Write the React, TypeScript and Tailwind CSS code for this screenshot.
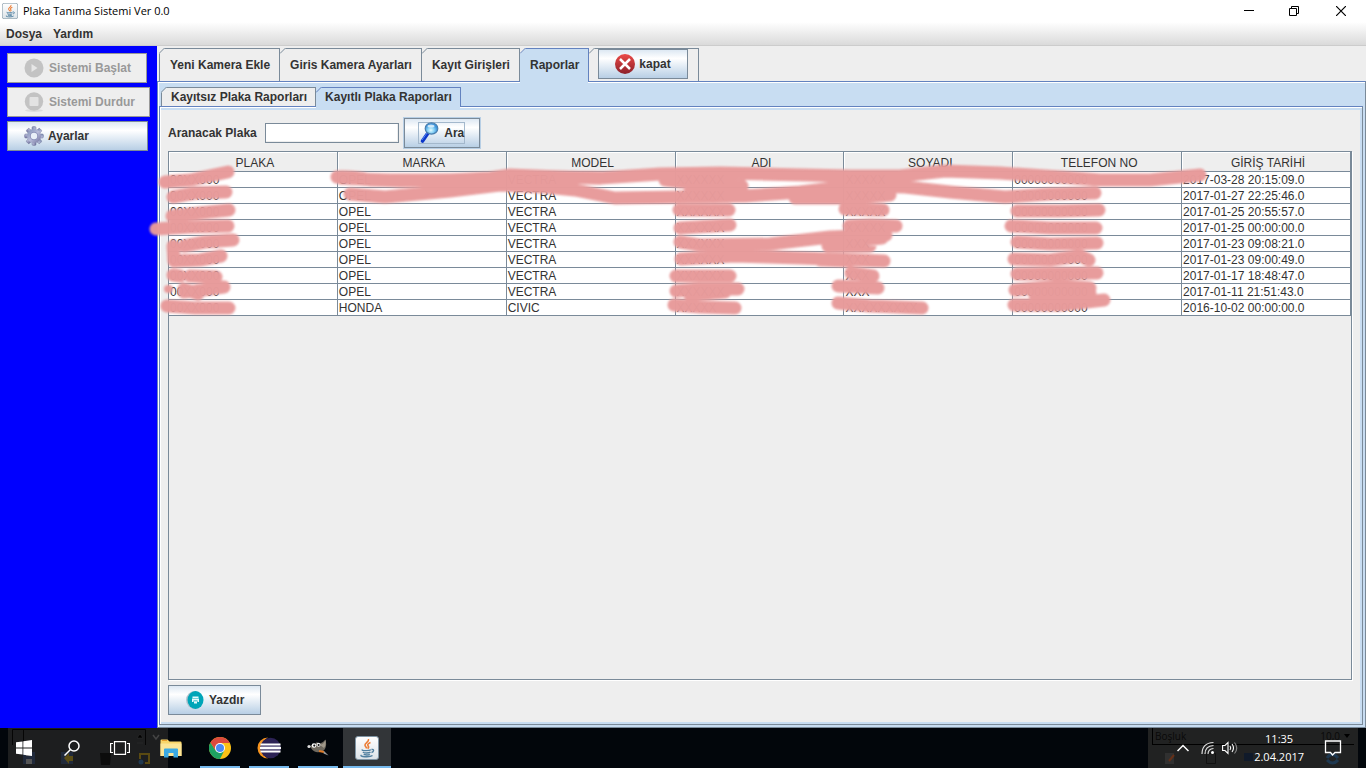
import type { ReactNode } from 'react'

const columns = ['PLAKA', 'MARKA', 'MODEL', 'ADI', 'SOYADI', 'TELEFON NO', 'GİRİŞ TARİHİ']

// personal columns only hold filler, they are scribbled over below
const rows = [
  ['00XX000', 'OPEL', 'VECTRA', 'XXXXXX', 'XXXXX', '00000000000', '2017-03-28 20:15:09.0'],
  ['00XX000', 'OPEL', 'VECTRA', 'XXXXXX', 'XXXXX', '00000000000', '2017-01-27 22:25:46.0'],
  ['00XX000', 'OPEL', 'VECTRA', 'XXXXXX', 'XXXXX', '00000000000', '2017-01-25 20:55:57.0'],
  ['00XX000', 'OPEL', 'VECTRA', 'XXXXXX', 'XXXXX', '00000000000', '2017-01-25 00:00:00.0'],
  ['00XX000', 'OPEL', 'VECTRA', 'XXXXXX', 'XXX', '00000000000', '2017-01-23 09:08:21.0'],
  ['00XX000', 'OPEL', 'VECTRA', 'XXXXXX', 'XXX', '00000000000', '2017-01-23 09:00:49.0'],
  ['00XX000', 'OPEL', 'VECTRA', 'XXXXXX', 'XXX', '00000000000', '2017-01-17 18:48:47.0'],
  ['00XX000', 'OPEL', 'VECTRA', 'XXXXXX', 'XXX', '00000000000', '2017-01-11 21:51:43.0'],
  ['00XX000', 'HONDA', 'CIVIC', 'XXXXX', 'XXXXXXXXX', '00000000000', '2016-10-02 00:00:00.0'],
]

const scribbles = [
  'M165 182L190 180L228 172',
  'M173 197L195 193L226 192',
  'M172 216L200 213L229 210',
  'M156 229L190 227L228 226',
  'M184 246L205 242L233 240',
  'M173 246L174 261L200 260L221 256',
  'M173 275L180 276',
  'M190 276L216 277',
  'M184 292L195 291L224 287M184 289L198 294',
  'M167 306L195 308L229 308',
  'M337 177Q350 176 370 180L450 180L490 178L510 175L560 177L600 178L660 174L720 173L850 176L900 176L945 171L1000 173L1060 177L1100 180L1150 180L1200 175',
  'M340 178L400 181L460 180M500 178L540 177L600 178M665 180L700 184L742 186M680 177L730 180',
  'M350 194L385 197L450 191L500 185L545 187L575 190L615 198L680 197L745 196L800 192L850 186L905 187L950 192L1005 197L1050 194L1095 193',
  'M795 198L850 198L890 195M690 192L745 195M830 192L880 190',
  'M679 210L729 210',
  'M680 228L730 225',
  'M680 242L700 245L770 244L830 237L886 235M828 246L870 246M850 241L882 238',
  'M681 259L735 256L800 258L884 261M820 260L850 261',
  'M676 276L730 276',
  'M676 291L700 289L738 289M690 295L725 292',
  'M674 305L700 307L735 308',
  'M845 209L883 210',
  'M849 226L870 225L896 226',
  'M851 273L873 276',
  'M838 286L878 288',
  'M838 303L870 306L922 308',
  'M1017 211L1060 211L1099 210',
  'M1011 226L1050 228L1096 228',
  'M1017 242L1050 244L1097 243',
  'M1014 259L1050 260L1080 256L1089 260',
  'M1017 274L1097 273',
  'M1015 290L1060 286L1090 288M1035 295L1090 293',
  'M1014 305L1060 305L1104 300M1050 300L1090 298',
]

function Scribbles() {
  return (
    <svg className="absolute -left-px -top-px overflow-visible pointer-events-none" width="1" height="1" aria-hidden="true">
      <defs>
        <filter id="brush" filterUnits="userSpaceOnUse" x="140" y="150" width="1100" height="180">
          <feGaussianBlur stdDeviation="0.9" />
        </filter>
      </defs>
      <g transform="translate(-168 -151)">
        <g filter="url(#brush)" opacity="0.98" fill="none" stroke="#e89b9b" strokeWidth="13" strokeLinecap="round" strokeLinejoin="round">
          {scribbles.map((d) => <path key={d} d={d} />)}
          <path d="M168 289h1" strokeWidth="8" />
        </g>
      </g>
    </svg>
  )
}

function MetalButton({ className = '', disabled, children }: { className?: string; disabled?: boolean; children: ReactNode }) {
  return (
    <button
      type="button"
      disabled={disabled}
      className={`flex h-[30px] items-center border font-bold ${disabled ? 'border-[#999] bg-[#eee] text-[#999]' : 'border-[#7a8a99] bg-linear-to-b from-[#dde8f3] via-white via-30% to-[#b8cfe5] text-[#333]'} ${className}`}
    >
      {children}
    </button>
  )
}

function Tab({ label, selected, first, small, children }: { label?: string; selected?: boolean; first?: boolean; small?: boolean; children?: ReactNode }) {
  const line = selected ? '#6382bf' : '#7a8a99'
  return (
    <div
      className={`relative flex border-t border-r ${first ? 'border-l' : ''} ${small ? 'h-[19px]' : 'h-[33px]'} ${selected ? 'border-[#6382bf] bg-[#c8ddf2]' : 'border-[#7a8a99] bg-[#eee]'}`}
    >
      {label ? (
        <button type="button" role="tab" aria-selected={!!selected} className={`font-bold ${small ? 'pl-[9px] pr-2' : 'pl-2.5 pr-[9px]'}`}>{label}</button>
      ) : children}
      <svg className={`absolute -top-px ${first ? '-left-px' : 'left-0'}`} width="6" height="6" aria-hidden="true">
        <path d="M0 0H6L0 6Z" fill={small ? '#c8ddf2' : '#eee'} />
        <path d="M0 5.5L5.5 0" stroke={line} />
      </svg>
      {/* hides the panel's top line under the active tab */}
      {selected && <span className={`absolute left-0 right-0 top-full bg-[#c8ddf2] ${small ? 'h-[3px]' : 'h-0.5'}`} />}
    </div>
  )
}

function JavaCup({ size }: { size: number }) {
  return (
    <svg width={size} height={size} viewBox="0 0 24 24" fill="none" aria-hidden="true">
      <defs>
        <linearGradient id="cup" x1="0" y1="0" x2="0" y2="1">
          <stop stopColor="#fff" />
          <stop offset="1" stopColor="#dce3e8" />
        </linearGradient>
      </defs>
      <rect x="0.5" y="0.5" width="23" height="23" rx="2.5" fill="url(#cup)" stroke="#7f95a5" />
      <path d="M13.5 3C14.5 6 9 7 10 9.500C10.300 10.400 11.500 11 11.500 12.500M15.500 6.500C12 8 12.500 9 13.300 10.200C13.800 11 13.400 12 12.600 12.500" stroke="#ec7d35" strokeWidth="1.600" />
      <path d="M7.500 13.500C5.500 14.800 14 15.200 16 13.700M8 16C8.500 17.400 14 17.200 15.500 16.200M8.800 18.200C9.500 19.300 13.500 19.200 14.800 18.300M16.500 13.500C19.500 12.800 19 16 16.500 16.500M6.500 19C3.500 20.600 14.500 21.800 17.500 19.500" stroke="#4f7f9f" strokeWidth="1.400" />
    </svg>
  )
}

function Gear() {
  return (
    <svg width="20" height="20" viewBox="0 0 20 20" aria-hidden="true">
      <defs>
        <linearGradient id="gear" x1="0" y1="0" x2="1" y2="1">
          <stop stopColor="#7c8eb2" />
          <stop offset=".5" stopColor="#b9bcda" />
          <stop offset="1" stopColor="#6f719d" />
        </linearGradient>
      </defs>
      <g fill="url(#gear)" stroke="#6b7196" strokeWidth=".5">
        {[0, 45, 90, 135].map((a) => <rect key={a} x="8" y="0.6" width="4" height="18.800" rx="1.200" transform={`rotate(${a} 10 10)`} />)}
      </g>
      <circle cx="10" cy="10" r="7" fill="url(#gear)" />
      <circle cx="10" cy="10" r="4.200" fill="#8d93ba" />
      <circle cx="10" cy="10" r="3.200" fill="#e9f0f8" />
    </svg>
  )
}

function Magnifier() {
  return (
    <svg width="20" height="22" viewBox="0 0 20 22" aria-hidden="true">
      <defs>
        <radialGradient id="lens" cx=".45" cy=".65">
          <stop stopColor="#e4fbff" />
          <stop offset=".5" stopColor="#8bd3f5" />
          <stop offset="1" stopColor="#3c94dc" />
        </radialGradient>
      </defs>
      <path d="M9 11L3.500 19" stroke="#0b36c9" strokeWidth="3.600" strokeLinecap="round" />
      <path d="M8 11L3 18" stroke="#4f83f2" strokeWidth="1" />
      <ellipse cx="12.500" cy="6.500" rx="6.300" ry="5.600" fill="url(#lens)" stroke="#4a7fae" strokeWidth="1.200" />
      <ellipse cx="12" cy="4" rx="3.500" ry="1.600" fill="#fff" opacity=".7" />
    </svg>
  )
}

function Chrome() {
  return (
    <svg width="22" height="22" viewBox="0 0 22 22" aria-hidden="true">
      <circle cx="11" cy="11" r="11" fill="#fbc116" />
      <path d="M1.470 5.500A11 11 0 0 0 11 22L15.300 13.500L11 11L6.700 13.500Z" fill="#1ea362" />
      <path d="M1.470 5.500A11 11 0 0 1 20.530 5.500L20.800 6H11L6.700 13.500Z" fill="#dc4a3d" />
      <circle cx="11" cy="11" r="5" fill="#fff" />
      <circle cx="11" cy="11" r="4" fill="#4a8af4" />
    </svg>
  )
}

function Eclipse() {
  return (
    <svg width="24" height="22" viewBox="0 0 24 22" aria-hidden="true">
      <path d="M11 0.500A10.500 10.500 0 0 0 11 21.500A12 12 0 0 1 11 0.500Z" fill="#f7941e" />
      <circle cx="13.500" cy="11" r="10.300" fill="#2c2255" />
      <path d="M3.500 7.500H23.500M3 11H24M3.500 14.500H23.500" stroke="#fff" strokeWidth="1.800" />
      <path d="M3.500 9.300H23.500M3.500 12.800H23.500" stroke="#8d88a8" strokeWidth="1" />
    </svg>
  )
}

function Gimp() {
  return (
    <svg width="22" height="18" viewBox="0 0 22 18" aria-hidden="true">
      <path d="M3 7L8 5L10 3L12 5Q16 4 18.500 0.500Q20 6 18 10Q15 14 9 13Q5 12 3 7Z" fill="#6f695f" />
      <path d="M13 6Q17 5 18.500 1Q19 7 17 9Z" fill="#a0988a" />
      <circle cx="2" cy="7.500" r="1.600" fill="#ddd" />
      <circle cx="7" cy="6.500" r="2.300" fill="#fff" />
      <circle cx="11.500" cy="5.800" r="2" fill="#eee" />
      <circle cx="7.300" cy="6.600" r="1.100" fill="#111" />
      <circle cx="11.600" cy="6" r="1" fill="#111" />
      <path d="M12 12L17 13" stroke="#e07b28" strokeWidth="2" />
      <path d="M17 12L21.500 16.500L16.500 14.500Z" fill="#9c9c9c" />
    </svg>
  )
}

function Folder() {
  return (
    <svg width="22" height="19" viewBox="0 0 22 19" aria-hidden="true">
      <path d="M0.500 1.500Q0.500 0.500 1.500 0.500H7.500L9.500 2.500H20.500Q21.500 2.500 21.500 3.500V17H0.500Z" fill="#f9d66b" />
      <path d="M2 1.500H7" stroke="#e79c2a" />
      <path d="M0.500 4.500H21.500V17H0.500Z" fill="#fce597" />
      <path d="M4 10.500Q4 9.500 5 9.500H17Q18 9.500 18 10.500V18.500H13.500V14H8.500V18.500H4Z" fill="#3ba9e4" />
    </svg>
  )
}

function TaskApp({ label, running, active, children }: { label: string; running?: boolean; active?: boolean; children: ReactNode }) {
  return (
    <button type="button" aria-label={label} className={`flex h-full w-12 flex-col items-center ${active ? 'bg-[#323538]' : ''}`}>
      <span className="flex flex-1 items-center pt-0.5">{children}</span>
      <span className={`h-0.5 ${active ? 'w-full' : 'w-10'} ${running || active ? 'bg-[#76b9ed]' : ''}`} />
    </button>
  )
}

function Taskbar() {
  return (
    <footer className="relative flex h-10 items-stretch bg-[#02060b] font-['Open_Sans',sans-serif] text-white">
      {/* docks of the window behind, seen through the bar */}
      <svg className="absolute left-2 top-0" width="160" height="40" aria-hidden="true">
        <rect width="160" height="40" fill="#1d1e1f" />
        <path d="M4.500 17V1.500H137.500V17M15.500 2V15" fill="none" stroke="#050505" />
        <path d="M129 10l3-4l3 4zM129 15h6" fill="#000" stroke="#333" strokeWidth=".5" />
        <path d="M145 7l3 4l3-4" fill="none" stroke="#444" strokeWidth="1.500" />
        <path d="M15 24h12v12H15zM53 24h12v12H53z" fill="#20293a" />
        <path d="M18 24h6v4h-6zM18 31h6v5h-6z" fill="#555" />
        <path d="M56 30l5-5v3h4v5h-4v3z" fill="#5a4c14" />
        <path d="M92 25h11l-1 12h-9z" fill="#0c0c0c" />
        <path d="M132 31v-5h9v9h-4" fill="none" stroke="#5a4a12" strokeWidth="2" />
        <circle cx="133" cy="34" r="2.500" fill="#1f3850" />
      </svg>
      <div className="absolute right-2 top-0 h-10 w-[210px] bg-[#212222] px-1 text-[10px] leading-4 text-[#090909]">
        <div className="flex h-[17px] justify-between border-b border-l border-black pl-0.5 pr-1">
          <span>Boşluk</span>
          <span className="flex items-center gap-1">
            10,0
            <svg width="6" height="4" aria-hidden="true"><path d="M0 0H6L3 4Z" /></svg>
          </span>
        </div>
        <svg className="absolute left-4 top-6" width="190" height="14" aria-hidden="true">
          <path d="M1 1h9v11H1z" fill="#303030" />
          <path d="M5 9l5-6" stroke="#653018" strokeWidth="2" />
          <path d="M42.500 1.500h9v10h-9z" fill="none" stroke="#111" />
          <path d="M80 1h9v8h-9z" fill="#101a2a" />
          <path d="M163 6q5-7 11 0M163 8q6 6 11 0" fill="none" stroke="#1e3850" strokeWidth="3" />
        </svg>
      </div>
      <div className="relative flex w-full items-stretch">
        <button type="button" aria-label="Başlat" className="flex w-12 items-center justify-center">
          <svg width="16" height="16" viewBox="0 0 16 16" fill="#fff"><path d="M0 2.300L6.500 1.400V7.600H0ZM7.300 1.300L16 0V7.600H7.300ZM0 8.400H6.500V14.600L0 13.700ZM7.300 8.400H16V16L7.300 14.700Z" /></svg>
        </button>
        <button type="button" aria-label="Ara" className="flex w-12 items-center justify-center">
          <svg width="16" height="16" viewBox="0 0 16 16" fill="none" stroke="#fff" strokeWidth="1.500"><circle cx="10" cy="6" r="5" /><path d="M6.500 9.500L0.500 15.500" /></svg>
        </button>
        <button type="button" aria-label="Görev görünümü" className="flex w-12 items-center justify-center">
          <svg width="20" height="14" viewBox="0 0 20 14" fill="none" stroke="#fff" strokeWidth="1.200"><path d="M4.500 .6H15.500V13.400H4.500ZM3 2.500H.6V11.500H3M17 2.500H19.400V11.500H17" /></svg>
        </button>
        <div className="ml-[3px] flex gap-px">
          <TaskApp label="Dosya Gezgini"><Folder /></TaskApp>
          <TaskApp label="Chrome" running><Chrome /></TaskApp>
          <TaskApp label="Eclipse" running><Eclipse /></TaskApp>
          <TaskApp label="GIMP" running><Gimp /></TaskApp>
          <TaskApp label="Plaka Tanıma Sistemi" active><JavaCup size={24} /></TaskApp>
        </div>
        <div className="ml-auto flex items-center pr-6">
          <div className="flex items-center gap-3">
            <svg width="12" height="8" viewBox="0 0 12 8" fill="none" stroke="#fff" strokeWidth="1.500" aria-hidden="true"><path d="M.5 7L6 1.500L11.500 7" /></svg>
            <svg width="13" height="14" viewBox="0 0 13 14" fill="none" stroke="#ddd" strokeWidth="1.200" aria-hidden="true">
              <path d="M1 13Q1 2 12.500 1.500M4 13Q4 5 12.500 4.500M7 13Q7 8 12.500 7.500" />
              <circle cx="11.500" cy="11.500" r="1.500" fill="#fff" stroke="none" />
            </svg>
            <svg className="-ml-1" width="16" height="14" viewBox="0 0 16 14" fill="none" stroke="#fff" strokeWidth="1.100" aria-hidden="true">
              <path d="M.6 4.500H3L6 1.500V12.500L3 9.500H.6ZM8 5Q9.500 7 8 9M10 3Q13 7 10 11" />
              <path d="M12.500 1.500Q17 7 12.500 12.500" stroke="#888" />
            </svg>
          </div>
          <div className="ml-4 text-center text-[11px] leading-[18px]">
            <div>11:35</div>
            <div>2.04.2017</div>
          </div>
          <svg className="ml-5" width="18" height="18" viewBox="0 0 18 18" fill="none" stroke="#fff" strokeWidth="1.300" aria-hidden="true"><path d="M1.500 2H16.500V13.500H11L8.500 16L6.500 13.500H1.500Z" /></svg>
        </div>
      </div>
    </footer>
  )
}

export default function App() {
  return (
    <div className="flex min-h-screen flex-col overflow-hidden bg-[#eee] font-['Liberation_Sans',Arial,sans-serif] text-xs text-[#333]">
      <header>
        <div className="flex h-[22px] items-center bg-white pl-0.5 font-['Open_Sans',sans-serif] text-[11px] text-black">
          <JavaCup size={16} />
          <h1 className="ml-[5px]">Plaka Tanıma Sistemi Ver 0.0</h1>
          <div className="ml-auto flex h-full">
            <button type="button" aria-label="Küçült" className="flex w-[45px] items-center justify-center"><svg width="10" height="10" stroke="#000"><path d="M0 4.500H10" /></svg></button>
            <button type="button" aria-label="Geri yükle" className="flex w-[45px] items-center justify-center"><svg width="10" height="10" fill="none" stroke="#000"><path d="M.5 2.500H7.500V9.500H.5ZM2.500 2V.5H9.500V7.500H8" /></svg></button>
            <button type="button" aria-label="Kapat" className="flex w-[50px] items-center justify-center"><svg width="10" height="10" stroke="#000" strokeWidth="1.200"><path d="M0 0L10 10M10 0L0 10" /></svg></button>
          </div>
        </div>
        <nav className="flex h-6 items-center gap-[11px] border-b border-[#ccc] bg-linear-to-b from-white to-[#dadada] px-1.5 font-bold">
          <button type="button">Dosya</button>
          <button type="button">Yardım</button>
        </nav>
      </header>

      <div className="flex flex-1">
        <aside className="flex w-[157px] shrink-0 flex-col gap-1 bg-[#00f] p-[7px]">
          <MetalButton disabled className="w-[140px] gap-[5px] pl-4">
            <svg width="20" height="20" aria-hidden="true"><circle cx="10" cy="10" r="9.500" fill="#c3c3c3" /><path d="M7.500 6L13.500 10L7.500 14Z" fill="#e6e6e6" /></svg>
            Sistemi Başlat
          </MetalButton>
          <MetalButton disabled className="w-[143px] gap-[5px] pl-4">
            <svg width="20" height="20" aria-hidden="true"><ellipse cx="10" cy="18.500" rx="9" ry="1.500" fill="#dcdcdc" /><circle cx="10" cy="9.500" r="9.200" fill="#c3c3c3" /><rect x="5.500" y="5" width="9" height="9" rx="1" fill="#e3e3e3" /></svg>
            Sistemi Durdur
          </MetalButton>
          <MetalButton className="w-[141px] gap-1 pl-4">
            <Gear />
            Ayarlar
          </MetalButton>
        </aside>

        <main className="relative flex min-w-0 flex-1 flex-col pt-0.5">
          <div role="tablist" className="flex pl-0.5">
            <Tab label="Yeni Kamera Ekle" first />
            <Tab label="Giris Kamera Ayarları" />
            <Tab label="Kayıt Girişleri" />
            <Tab label="Raporlar" selected />
            <Tab>
              <MetalButton className="ml-[9px] mr-2.5 w-[90px] gap-1 pl-4">
                <svg width="20" height="20" aria-hidden="true">
                  <defs><linearGradient id="red" x1="0" y1="0" x2="0" y2="1"><stop stopColor="#ec4a48" /><stop offset="1" stopColor="#8c2029" /></linearGradient></defs>
                  <circle cx="10" cy="10" r="10" fill="url(#red)" />
                  <path d="M5 5L15 15M15 5L5 15" stroke="#fff" strokeWidth="2.500" />
                </svg>
                kapat
              </MetalButton>
            </Tab>
          </div>

          <div className="flex flex-1 flex-col border border-[#7a8a99] border-t-[#6382bf] border-l-[#6382bf] bg-[#c8ddf2] pb-0.5 pl-px pr-0.5 pt-[5px] shadow-[inset_1px_1px_#fff]">
            <div role="tablist" className="flex pl-0.5">
              <Tab small first label="Kayıtsız Plaka Raporları" />
              <Tab small selected label="Kayıtlı Plaka Raporları" />
            </div>

            <div className="flex flex-1 flex-col border border-[#7a8a99] border-t-[#6382bf] border-l-[#6382bf] bg-[#c8ddf2] pb-0.5 pl-px pr-0.5 pt-[3px] shadow-[inset_1px_1px_#fff]">
              <div className="flex flex-1 flex-col bg-[#eee] pb-[7px] pl-[7px] pr-2 pt-2">
                <form className="flex h-[29px] items-center" onSubmit={(e) => e.preventDefault()}>
                  <label htmlFor="plaka" className="font-bold">Aranacak Plaka</label>
                  <input id="plaka" className="ml-2 h-5 w-[134px] border border-[#7a8a99] bg-white px-1 shadow-[inset_-1px_-1px_#eee]" />
                  <MetalButton className="ml-[5px] w-[76px] justify-center outline outline-[#b8cfe5]">
                    <span className="flex h-[22px] items-center gap-[5px] border border-[#a3b8cc]"><Magnifier />Ara</span>
                  </MetalButton>
                </form>

                <div className="relative mt-1 flex-1 border border-[#7a8a99] shadow-[1px_1px_#fff]">
                  <table className="w-full table-fixed border-separate border-spacing-0">
                    <thead>
                      <tr>
                        {columns.map((c) => (
                          <th key={c} scope="col" className="h-5 border-b border-r border-[#7a8a99] p-0 pl-1 pt-1 text-center font-normal leading-[15px] shadow-[inset_1px_1px_#fff]">{c}</th>
                        ))}
                      </tr>
                    </thead>
                    <tbody>
                      {rows.map((row) => (
                        <tr key={row[6]}>
                          {row.map((cell, i) => (
                            <td key={i} className="h-4 border-b border-r border-[#7a8a99] bg-white p-0 pl-px pt-0.5 leading-[13px]">{cell}</td>
                          ))}
                        </tr>
                      ))}
                    </tbody>
                  </table>
                  <Scribbles />
                </div>

                <MetalButton className="mt-[5px] w-[93px] gap-[5px] pl-[17px]">
                  <svg width="18" height="20" aria-hidden="true">
                    <ellipse cx="8.500" cy="10" rx="8.500" ry="9" fill="#b3c3cf" />
                    <ellipse cx="9.500" cy="10" rx="8" ry="9" fill="#00a5b8" />
                    <path d="M6.500 6.500H12.500V8H6.500ZM6 8.500H13V12H11.500V10.500H7.500V12H6ZM8 11.300H11V13.500H8Z" fill="#e8fafb" />
                  </svg>
                  Yazdır
                </MetalButton>
              </div>
            </div>
          </div>
        </main>
      </div>

      <Taskbar />
    </div>
  )
}
